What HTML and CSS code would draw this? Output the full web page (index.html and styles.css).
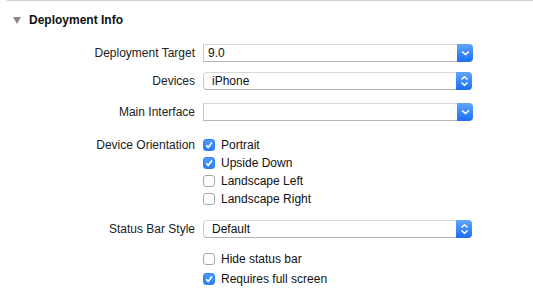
FILE: index.html
```html
<!DOCTYPE html>
<html lang="en">
<head>
    <meta charset="UTF-8">
    <title>Deployment Info</title>
    <link rel="stylesheet" href="styles.css">
</head>
<body>
    <div class="panel">
        <!-- Section header -->
        <div class="section-header">
            <span class="disclosure"></span>
            <span class="section-title">Deployment Info</span>
        </div>

        <div class="form">
            <div class="row row-target">
                <label class="label">Deployment Target</label>
                <div class="combo">
                    <span class="combo-value">9.0</span>
                    <span class="combo-btn">
                        <svg width="9" height="6" viewBox="0 0 9 6"><path d="M1 1.5 L4.5 4.5 L8 1.5" fill="none" stroke="#fff" stroke-width="1.6"/></svg>
                    </span>
                </div>
            </div>

            <div class="row row-devices">
                <label class="label">Devices</label>
                <div class="popup">
                    <span class="popup-value">iPhone</span>
                    <span class="popup-btn">
                        <svg width="9" height="12" viewBox="0 0 9 12"><path d="M1.5 4.5 L4.5 1.8 L7.5 4.5 M1.5 7.5 L4.5 10.2 L7.5 7.5" fill="none" stroke="#fff" stroke-width="1.5"/></svg>
                    </span>
                </div>
            </div>

            <div class="row row-main">
                <label class="label">Main Interface</label>
                <div class="combo">
                    <span class="combo-value"></span>
                    <span class="combo-btn">
                        <svg width="9" height="6" viewBox="0 0 9 6"><path d="M1 1.5 L4.5 4.5 L8 1.5" fill="none" stroke="#fff" stroke-width="1.6"/></svg>
                    </span>
                </div>
            </div>

            <div class="row row-orientation">
                <label class="label">Device Orientation</label>
                <div class="checks">
                    <div class="check on"><span class="box"><svg width="10" height="10" viewBox="0 0 10 10"><path d="M2.2 5.2 L4.2 7.4 L7.9 2.4" fill="none" stroke="#fff" stroke-width="1.7"/></svg></span>Portrait</div>
                    <div class="check on"><span class="box"><svg width="10" height="10" viewBox="0 0 10 10"><path d="M2.2 5.2 L4.2 7.4 L7.9 2.4" fill="none" stroke="#fff" stroke-width="1.7"/></svg></span>Upside Down</div>
                    <div class="check"><span class="box"></span>Landscape Left</div>
                    <div class="check"><span class="box"></span>Landscape Right</div>
                </div>
            </div>

            <div class="row row-status">
                <label class="label">Status Bar Style</label>
                <div class="popup">
                    <span class="popup-value">Default</span>
                    <span class="popup-btn">
                        <svg width="9" height="12" viewBox="0 0 9 12"><path d="M1.5 4.5 L4.5 1.8 L7.5 4.5 M1.5 7.5 L4.5 10.2 L7.5 7.5" fill="none" stroke="#fff" stroke-width="1.5"/></svg>
                    </span>
                </div>
            </div>

            <div class="row row-hide">
                <span class="label"></span>
                <div class="check"><span class="box"></span>Hide status bar</div>
            </div>

            <div class="row row-full">
                <span class="label"></span>
                <div class="check on"><span class="box"><svg width="10" height="10" viewBox="0 0 10 10"><path d="M2.2 5.2 L4.2 7.4 L7.9 2.4" fill="none" stroke="#fff" stroke-width="1.7"/></svg></span>Requires full screen</div>
            </div>
        </div>
    </div>
</body>
</html>
```

FILE: styles.css
```css
body {
    margin: 0;
    background-color: #fff;
    font-family: "Liberation Sans", Arial, sans-serif;
    font-size: 12px;
    color: #222;
}
.panel {
    margin-left: 7px;
    border-top: 1px solid #d0d0d0;
    height: 295px;
}
.section-header {
    display: flex;
    align-items: center;
    height: 16px;
    margin-top: 11px;
    padding-left: 6px;
}
.disclosure {
    width: 0;
    height: 0;
    border-left: 4px solid transparent;
    border-right: 4px solid transparent;
    border-top: 7px solid #8a8a8a;
    margin-right: 8px;
}
.section-title {
    font-weight: bold;
    color: #111;
    font-size: 12px;
}
.form {
    display: flex;
    flex-direction: column;
    margin-top: 16px;
}
.row {
    display: flex;
    align-items: flex-start;
}
.label {
    width: 188px;
    flex: none;
    text-align: right;
    line-height: 18px;
    padding-right: 8px;
}
.row-devices { margin-top: 10px; }
.row-main { margin-top: 13px; }
.row-orientation { margin-top: 15px; }
.row-status { margin-top: 12px; }
.row-hide { margin-top: 12px; }
.row-full { margin-top: 2px; }

.combo {
    display: flex;
    width: 270px;
    height: 18px;
}
.combo-value {
    flex: 1;
    border: 1px solid #c8c8c8;
    border-right: none;
    border-top-color: #d8d8d8;
    border-bottom-color: #b8b8b8;
    line-height: 16px;
    padding-left: 4px;
    color: #111;
}
.combo-btn,
.popup-btn {
    width: 16px;
    flex: none;
    display: flex;
    align-items: center;
    justify-content: center;
    background: linear-gradient(#5fa6fb, #1b6ef6);
    border-radius: 0 4px 4px 0;
}
.popup {
    display: flex;
    width: 269px;
    height: 18px;
}
.popup-value {
    flex: 1;
    border: 1px solid #c8c8c8;
    border-right: none;
    border-top-color: #d8d8d8;
    border-bottom-color: #b4b4b4;
    border-radius: 4px 0 0 4px;
    line-height: 16px;
    padding-left: 8px;
    color: #111;
}
.checks {
    display: flex;
    flex-direction: column;
}
.check {
    display: flex;
    align-items: center;
    height: 18px;
    color: #111;
}
.box {
    width: 10px;
    height: 10px;
    border: 1px solid #a8a8a8;
    border-radius: 3px;
    background: #fff;
    margin-right: 6px;
    display: flex;
    align-items: center;
    justify-content: center;
}
.check.on .box {
    background: linear-gradient(#4e9bfa, #2a7ff6);
    border-color: #2f7fee;
}
```
